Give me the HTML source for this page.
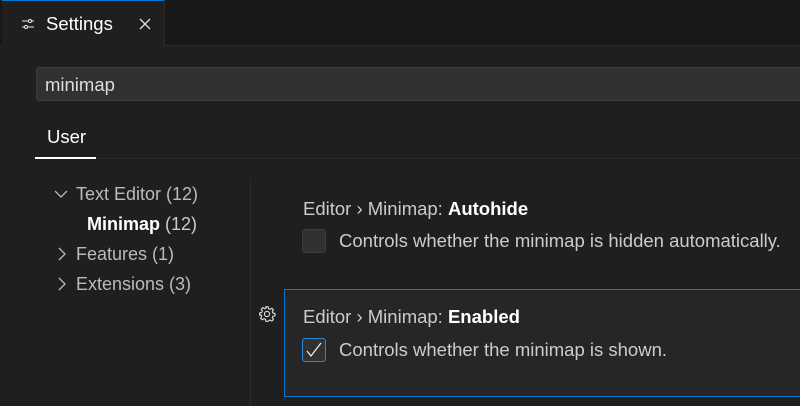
<!DOCTYPE html>
<html><head><style>
*{margin:0;padding:0;box-sizing:border-box}
body{width:800px;height:406px;background:#1f1f1f;font-family:"Liberation Sans",sans-serif;color:#ccc;position:relative;overflow:hidden}
.a{position:absolute;white-space:nowrap}
</style></head><body>
<div class="a" style="left:0;top:0;width:800px;height:46px;background:#181818;border-bottom:1px solid #2b2b2b"></div>
<div class="a" style="left:2px;top:0;width:163px;height:47px;background:#1f1f1f;border-top:1px solid #0078d4;border-right:1px solid #2b2b2b"></div>
<svg class="a" style="left:21px;top:17px" width="14" height="14" viewBox="0 0 14 14" stroke="#ddd" fill="none" stroke-width="1.1"><line x1="1" y1="4" x2="13" y2="4"/><line x1="1" y1="10" x2="13" y2="10"/><circle cx="9" cy="4" r="1.6" fill="#1f1f1f"/><circle cx="5" cy="10" r="1.6" fill="#1f1f1f"/></svg>
<div class="a" style="left:46px;top:13px;font-size:18.5px;color:#fff">Settings</div>
<svg class="a" style="left:139px;top:18px" width="12" height="12" stroke="#ddd" stroke-width="1.3"><line x1="1" y1="1" x2="11" y2="11"/><line x1="11" y1="1" x2="1" y2="11"/></svg>
<div class="a" style="left:36px;top:67px;width:770px;height:34px;background:#313131;border:1px solid #3c3c3c;border-radius:3px"></div>
<div class="a" style="left:45px;top:74px;font-size:18.5px;color:#ddd">minimap</div>
<div class="a" style="left:47px;top:126px;font-size:18.5px;color:#fff">User</div>
<div class="a" style="left:35px;top:158px;width:765px;height:1px;background:#2b2b2b"></div>
<div class="a" style="left:35px;top:157px;width:61px;height:2px;background:#fff"></div>
<div class="a" style="left:250px;top:180px;width:1px;height:226px;background:#2b2b2b"></div>
<svg class="a" style="left:54px;top:189px" width="14" height="10" fill="none" stroke="#bbb" stroke-width="1.3"><path d="M1 2l6 6 6-6"/></svg>
<div class="a" style="left:76px;top:184px;font-size:18px;color:#bbb">Text Editor (12)</div>
<div class="a" style="left:87px;top:214px;font-size:18px;color:#ccc"><b style="color:#fff">Minimap</b> (12)</div>
<svg class="a" style="left:58px;top:247px" width="8" height="14" fill="none" stroke="#bbb" stroke-width="1.3"><path d="M1 1l6 6-6 6"/></svg>
<div class="a" style="left:76px;top:244px;font-size:18px;color:#bbb">Features (1)</div>
<svg class="a" style="left:58px;top:277px" width="8" height="14" fill="none" stroke="#bbb" stroke-width="1.3"><path d="M1 1l6 6-6 6"/></svg>
<div class="a" style="left:76px;top:274px;font-size:18px;color:#bbb">Extensions (3)</div>
<div class="a" style="left:303px;top:198px;font-size:18.5px;color:#ccc">Editor › Minimap: <b style="color:#fff">Autohide</b></div>
<div class="a" style="left:302px;top:229px;width:24px;height:24px;background:#313131;border:1px solid #3c3c3c;border-radius:3px"></div>
<div class="a" style="left:339px;top:230px;font-size:18.5px;color:#ccc">Controls whether the minimap is hidden automatically.</div>
<div class="a" style="left:284px;top:289px;width:530px;height:108px;background:#262626;border:1px solid #0078d4"></div>
<svg class="a" style="left:258px;top:305px" width="18" height="18" viewBox="0 0 16 16" fill="none" stroke="#ddd" stroke-width="1"><circle cx="8" cy="8" r="2.3"/><path d="M7 1.5h2l.4 1.8 1.3.6 1.6-1 1.4 1.4-1 1.6.6 1.3 1.8.4v2l-1.8.4-.6 1.3 1 1.6-1.4 1.4-1.6-1-1.3.6L9 14.5H7l-.4-1.8-1.3-.6-1.6 1-1.4-1.4 1-1.6-.6-1.3L1.5 9V7l1.8-.4.6-1.3-1-1.6 1.4-1.4 1.6 1 1.3-.6z"/></svg>
<div class="a" style="left:303px;top:306px;font-size:18.5px;color:#ccc">Editor › Minimap: <b style="color:#fff">Enabled</b></div>
<div class="a" style="left:302px;top:338px;width:24px;height:24px;background:#313131;border:1px solid #2488db;border-radius:3px"></div>
<svg class="a" style="left:305px;top:341px" width="18" height="18" fill="none" stroke="#eee" stroke-width="1.3"><path d="M2 10l4 5 10-13"/></svg>
<div class="a" style="left:339px;top:339px;font-size:18.5px;color:#ccc">Controls whether the minimap is shown.</div>
</body></html>
